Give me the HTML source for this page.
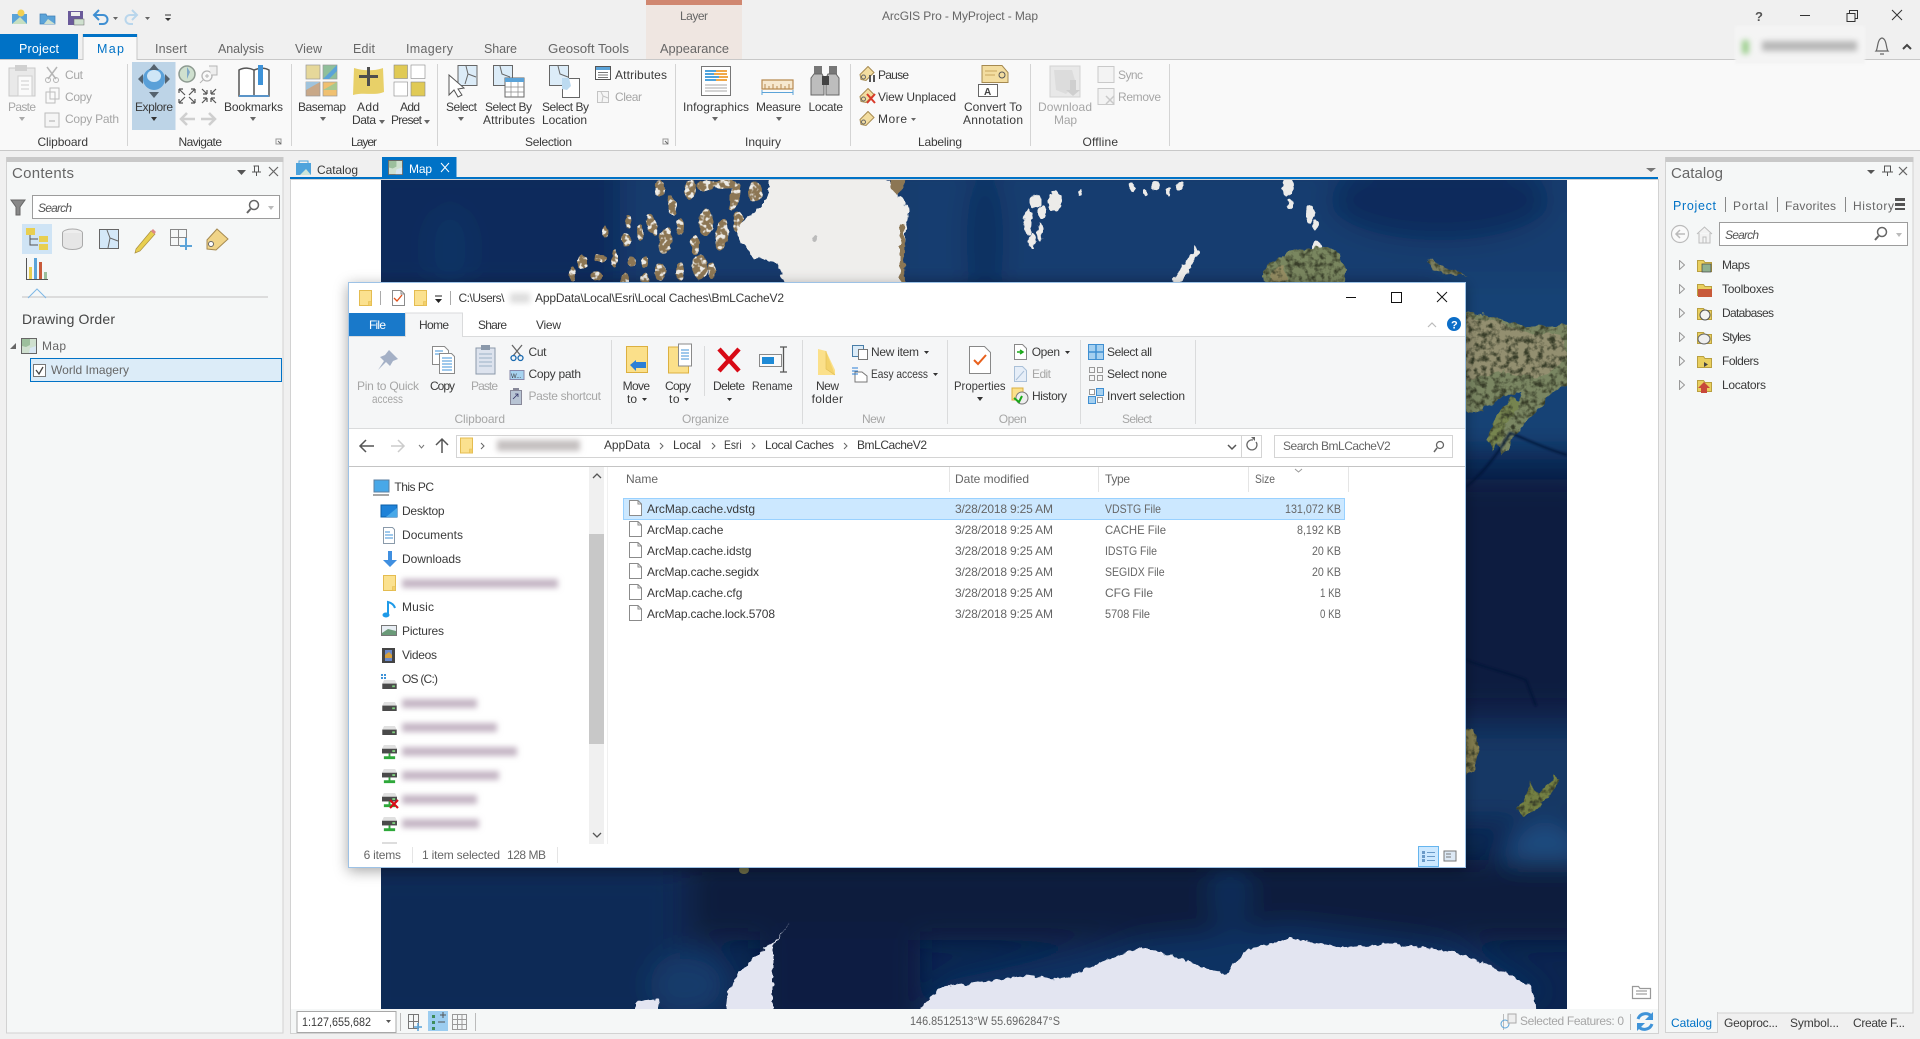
<!DOCTYPE html>
<html><head><meta charset="utf-8"><title>ArcGIS Pro - MyProject - Map</title>
<style>
html,body{margin:0;padding:0;background:#f0f0f0;width:1920px;height:1039px;overflow:hidden}
svg{display:block;font-family:"Liberation Sans",sans-serif;font-size:12px}
text{fill:#3a3a3a}
.g text,text.g{fill:#a6a6a6}
.m text,text.m{fill:#666}
.tb text{font-size:12.500px}
.lnk{stroke:#8a8a8a;fill:none}
</style></head><body>
<svg width="1920" height="1039" viewBox="0 0 1920 1039" xmlns="http://www.w3.org/2000/svg">
<defs>
<filter id="b1" x="-30%" y="-60%" width="160%" height="220%"><feGaussianBlur stdDeviation="3"/></filter>
<filter id="b8" x="-50%" y="-50%" width="200%" height="200%"><feGaussianBlur stdDeviation="13"/></filter>
<filter id="b3" x="-30%" y="-30%" width="160%" height="160%"><feGaussianBlur stdDeviation="1"/></filter>
<filter id="r1" x="-5%" y="-5%" width="110%" height="110%" color-interpolation-filters="sRGB"><feTurbulence type="fractalNoise" baseFrequency=".09" numOctaves="3" seed="4" result="n"/><feDisplacementMap in="SourceGraphic" in2="n" scale="9" xChannelSelector="R" yChannelSelector="G" result="d"/><feTurbulence type="fractalNoise" baseFrequency=".16" numOctaves="3" seed="7"/><feColorMatrix type="matrix" values="0 0 0 0 .22 0 0 0 0 .24 0 0 0 0 .16 0 0 0 3 -1.300" result="dk"/><feComposite in="dk" in2="d" operator="in" result="dki"/><feMerge><feMergeNode in="d"/><feMergeNode in="dki"/></feMerge></filter>
<filter id="r2" x="-5%" y="-5%" width="110%" height="110%" color-interpolation-filters="sRGB"><feTurbulence type="fractalNoise" baseFrequency=".16" numOctaves="2" seed="9" result="n"/><feDisplacementMap in="SourceGraphic" in2="n" scale="6" xChannelSelector="R" yChannelSelector="G"/></filter>
<filter id="spk" x="-5%" y="-5%" width="110%" height="110%" color-interpolation-filters="sRGB"><feTurbulence type="fractalNoise" baseFrequency=".13" numOctaves="2" seed="3" result="n"/><feDisplacementMap in="SourceGraphic" in2="n" scale="5" xChannelSelector="R" yChannelSelector="G" result="d"/><feTurbulence type="fractalNoise" baseFrequency=".2" numOctaves="2" seed="12"/><feColorMatrix type="matrix" values="0 0 0 0 .93 0 0 0 0 .92 0 0 0 0 .9 0 0 0 7 -3.500" result="w"/><feComposite in="w" in2="d" operator="in" result="wi"/><feMerge><feMergeNode in="d"/><feMergeNode in="wi"/></feMerge></filter>
<filter id="sh" x="-5%" y="-5%" width="110%" height="110%"><feDropShadow dx="0" dy="3" stdDeviation="7" flood-color="#000" flood-opacity=".35"/></filter>
<clipPath id="mc"><rect x="381" y="180" width="1186" height="829"/></clipPath>
<symbol id="fold" viewBox="0 0 13 16"><path d="M.5.5h12v15H.5z" fill="#fbe18f" stroke="#e4bc50"/><path d="M9.5 11.5h3v4h-3z" fill="#f3d06a" stroke="#e4bc50" stroke-width=".6"/></symbol>
<symbol id="file" viewBox="0 0 13 16"><path d="M.5.5h8.5l3.5 3.5v11.500H.5z" fill="#fff" stroke="#8b8b8b"/><path d="M9 .5V4h3.500" fill="none" stroke="#8b8b8b"/></symbol>
<symbol id="drv" viewBox="0 0 16 10"><path d="M2 0h12l2 4v5H0V4z" fill="#e0e0e0"/><path d="M0 4h16v6H0z" fill="#4a4a4a"/><path d="M11 6h3v2h-3z" fill="#7fd07f"/></symbol>
<symbol id="net" viewBox="0 0 16 16"><path d="M2 0h12l2 4v5H0V4z" fill="#e0e0e0"/><path d="M0 4h16v5H0z" fill="#4a4a4a"/><path d="M11 5.500h3v2h-3z" fill="#7fd07f"/><path d="M7 9h2v3h5v3H2v-3h5z" fill="#2ea83a"/></symbol>
<symbol id="tag" viewBox="0 0 16 16"><path d="M9 .5l6 6-8 8-5-1-1-5z" fill="#f3dda0" stroke="#a68a50"/><circle cx="4.500" cy="11" r="2" fill="none" stroke="#666"/></symbol>
<symbol id="tri" viewBox="0 0 6 10"><path d="M.5.500l5 4.500-5 4.500z" fill="#f3f5f5" stroke="#999"/></symbol>
<symbol id="cat" viewBox="0 0 15 15"><path d="M.5 2.500h6l1.500 2h6.500v9H.5z" fill="#e9cf5e" stroke="#b9a040"/></symbol>
<symbol id="mapi" viewBox="0 0 16 16"><path d="M.5.5h15v15H.5z" fill="#cfe0cf" stroke="#666"/><path d="M1 1h8v6l-4 2-4-1z" fill="#9cbf9c"/><path d="M8 15l1-5 6-2v7z" fill="#d8e6f2"/></symbol>
</defs>

<!-- base chrome -->
<rect width="1920" height="1039" fill="#f0f0f0"/>
<rect y="60" width="1920" height="90" fill="#f9f9f9"/>
<path d="M0 59.500H1920M0 150.500H1920" stroke="#c8c8c8"/>
<rect x="646" width="96" height="59" fill="#efe6e1"/><rect x="646" width="96" height="5" fill="#d08770"/>
<rect y="34" width="78" height="25" fill="#0072c6"/>
<path d="M83 60V34.500H137V60" fill="#f9f9f9" stroke="#c8c8c8"/><rect x="83" y="34" width="54" height="3" fill="#0072c6"/>

<!-- QAT -->
<path d="M12 14h15v10H12z" fill="#5ba3d8"/><path d="M12 24l8-7 7 7z" fill="#c6dfc1"/><circle cx="21" cy="13" r="3.500" fill="#f2cf52"/>
<path d="M40 14h6l1 2h8v8H40z" fill="#5ba3d8" stroke="#3f7fb5" stroke-width=".7"/><path d="M44 24l4-5 7 5z" fill="#cfe0cf"/>
<rect x="68" y="11" width="15" height="14" fill="#6a5a9a"/><rect x="71" y="12" width="9" height="4" fill="#eee"/><rect x="74" y="19" width="10" height="6" fill="#cfe0cf" stroke="#666" stroke-width=".5"/>
<path d="M95 15h8a4.500 4.500 0 0 1 0 9h-4" fill="none" stroke="#3f8fd2" stroke-width="2"/><path d="M99 10l-5 5 5 5" fill="none" stroke="#3f8fd2" stroke-width="2"/>
<path d="M136 15h-6a4.500 4.500 0 0 0 0 9h3" fill="none" stroke="#b9d6ec" stroke-width="2"/><path d="M132 10l5 5-5 5" fill="none" stroke="#b9d6ec" stroke-width="2"/>
<path d="M113 17h5l-2.500 3zM145 17h5l-2.500 3z" fill="#666"/>
<path d="M165 15h6" stroke="#333"/><path d="M165 18h6l-3 3z" fill="#333"/>

<!-- title -->
<text x="882" y="20" textLength="156" class="m">ArcGIS Pro - MyProject - Map</text>
<text x="680" y="20" textLength="28" class="m">Layer</text>
<g class="tb">
<text x="19" y="53" textLength="40" style="fill:#fff">Project</text>
<text x="97" y="53" textLength="27" style="fill:#0072c6">Map</text>
<g class="m"><text x="155" y="53" textLength="32">Insert</text><text x="218" y="53" textLength="46">Analysis</text><text x="295" y="53" textLength="27">View</text><text x="353" y="53" textLength="22">Edit</text><text x="406" y="53" textLength="47">Imagery</text><text x="484" y="53" textLength="33">Share</text><text x="548" y="53" textLength="81" lengthAdjust="spacingAndGlyphs">Geosoft Tools</text><text x="660" y="53" textLength="69" lengthAdjust="spacingAndGlyphs">Appearance</text></g>
</g>

<!-- window controls -->
<text x="1755" y="21" style="font-weight:bold;fill:#555" font-size="13">?</text>
<path d="M1800 15.500h10M1847 13.500h8v8h-8zM1849.500 13V10.500h8v8H1855M1892 10l10 10M1902 10l-10 10" fill="none" stroke="#333"/>
<rect x="1735" y="26" width="130" height="38" fill="#f4f4f4" filter="url(#b3)"/>
<g filter="url(#b1)"><rect x="1742" y="40" width="7" height="14" rx="2" fill="#9ccf8e"/><rect x="1762" y="41" width="95" height="10" fill="#b8b8b8"/></g>
<path d="M1876 51c2-2 1-12 6-13 5 1 4 11 6 13zM1880 54h4" fill="none" stroke="#666" stroke-width="1.200"/><path d="M1903 49l4-4 4 4" fill="none" stroke="#444" stroke-width="2"/>

<!-- ribbon separators -->
<path d="M127.500 64v82M291.500 64v82M437.500 64v82M675.500 64v82M850.500 64v82M1030.500 64v82M1169.500 64v82" stroke="#d4d4d4"/>

<!-- clipboard -->
<rect x="9" y="68" width="26" height="28" fill="#e9e9e9" stroke="#c9c9c9"/><rect x="15" y="65" width="12" height="6" fill="#d0d0d0"/><path d="M18 76h14v20H18z" fill="#fafafa" stroke="#cfcfcf"/><path d="M21 81h8M21 85h8M21 89h8" stroke="#ccc"/>
<path d="M47 67l9 12M57 67l-9 12" stroke="#b5b5b5" stroke-width="1.500"/><circle cx="48" cy="80" r="2.500" fill="none" stroke="#b5b5b5"/><circle cx="56" cy="80" r="2.500" fill="none" stroke="#b5b5b5"/>
<path d="M50 88h9v11h-9zM46 92h9v11h-9z" fill="#fafafa" stroke="#bcbcbc"/><path d="M45 113h14v14H45z" fill="#f5f5f5" stroke="#bcbcbc"/><path d="M49 121h6" stroke="#aaa"/>
<g class="g"><text x="8" y="111" textLength="28">Paste</text><text x="65" y="79" textLength="18">Cut</text><text x="65" y="101" textLength="27">Copy</text><text x="65" y="123" textLength="54">Copy Path</text></g>
<path d="M19 117h6l-3 4z" fill="#aaa"/>
<text x="37.500" y="146" textLength="50.500">Clipboard</text>
<!-- navigate -->
<rect x="132" y="62" width="43.500" height="68" fill="#bdd4e7"/>
<ellipse cx="154" cy="79" rx="11" ry="11" fill="#5aa0d8"/><ellipse cx="154" cy="76" rx="7" ry="6" fill="#cfe6f7"/>
<path d="M154 64l5 6h-10zM154 98l5-6h-10zM138 79l5-5v10zM170 79l-5-5v10z" fill="#55626e"/>
<text x="135" y="111" textLength="38">Explore</text><path d="M151 117h6l-3 4z" fill="#333"/>
<circle cx="187" cy="74" r="8" fill="#cfe0cf" stroke="#8d9a90" stroke-width="1.500"/><path d="M187 67l3 5-3 7z" fill="#7fa8c8"/>
<circle cx="207" cy="76" r="5" fill="none" stroke="#b5b5b5" stroke-width="1.300"/><path d="M203 80l-3 3M205 76h4M207 74v4" stroke="#b5b5b5"/><path d="M209 66h8v9h-6" fill="#eee" stroke="#b5b5b5"/>
<path d="M179 89l6 6M179 89h4M179 89v4M195 89l-6 6M195 89h-4M195 89v4M179 103l6-6M179 103h4M179 103v-4M195 103l-6-6M195 103h-4M195 103v-4M207 94l-5-5M207 94h-4M207 94v-4M211 94l5-5M211 94h4M211 94v-4M207 98l-5 5M207 98h-4M207 98v4M211 98l5 5M211 98h4M211 98v4" stroke="#555" stroke-width="1.200" fill="none"/>
<path d="M195 119h-14M187 113l-6 6 6 6M201 119h14M209 113l6 6-6 6" fill="none" stroke="#cfcfcf" stroke-width="2.500"/>
<path d="M239 70c5-3 11-2 15 0v26h-15zM254 70c5-2 10-3 15 0v26h-15z" fill="#fff" stroke="#555" stroke-width="1.500"/><path d="M239 96h30" stroke="#5a94c8" stroke-width="2"/><rect x="258" y="65" width="5" height="20" fill="#3f93d8"/>
<text x="224" y="111" textLength="59">Bookmarks</text><path d="M250 117h6l-3 4z" fill="#666"/>
<text x="178.500" y="146" textLength="43.500">Navigate</text>
<path d="M276 139h5v5h-5z" fill="none" stroke="#999"/><path d="M278 141l3 3" stroke="#666"/>
<!-- layer -->
<rect x="306" y="65" width="14" height="14" fill="#e6d89a" stroke="#999" stroke-width=".7"/><rect x="323" y="65" width="14" height="14" fill="#8fbf9a" stroke="#999" stroke-width=".7"/><path d="M323 79l14-14v6l-8 8z" fill="#5ba3d8"/><rect x="306" y="82" width="14" height="14" fill="#c8a888" stroke="#999" stroke-width=".7"/><path d="M306 82h14l-14 8z" fill="#9fc3dc"/><rect x="323" y="82" width="14" height="14" fill="#f0c070" stroke="#999" stroke-width=".7"/><path d="M323 90l14-8v8z" fill="#a9c890"/>
<path d="M354 68c10 3 20 3 29 0l1 24c-10 4-20 0-31 3z" fill="#e8d068"/><path d="M367 67h3v8h8v3h-8v8h-3v-8h-8v-3h8z" fill="#4e4e4e"/>
<rect x="394" y="65" width="13.500" height="13.500" fill="#e0ca55" stroke="#888" stroke-width=".6"/><rect x="411" y="65" width="14" height="13.500" fill="#fff" stroke="#888" stroke-width=".6"/><rect x="394" y="82" width="13.500" height="14" fill="#fff" stroke="#888" stroke-width=".6"/><rect x="411" y="82" width="14" height="14" fill="#e0ca55" stroke="#888" stroke-width=".6"/>
<text x="298" y="111" textLength="48">Basemap</text><text x="357" y="111" textLength="22">Add</text><text x="352" y="124" textLength="24">Data</text><text x="400" y="111" textLength="20">Add</text><text x="391" y="124" textLength="31">Preset</text>
<path d="M320 117h6l-3 4zM379 120h6l-3 4zM424 120h6l-3 4z" fill="#666"/>
<text x="351" y="146" textLength="26">Layer</text>
<!-- selection -->
<path d="M458 65.500h19v20h-19z" fill="#dcecf8" stroke="#666"/><path d="M466 66l2 8 8 3M468 74l-3 10" stroke="#666" fill="none"/><path d="M449 75v20l5-5 4 7 4-2-4-6 6-1z" fill="#fff" stroke="#555"/>
<path d="M493.500 65.500h19v20h-19z" fill="#dcecf8" stroke="#666"/><path d="M500 66l2 8 8 3" stroke="#666" fill="none"/><rect x="505" y="78" width="19" height="19" fill="#fff" stroke="#666"/><rect x="505" y="78" width="19" height="4" fill="#5ba3d8"/><path d="M505 87h19M505 92h19M511 82v15M518 82v15" stroke="#888" stroke-width=".7"/>
<path d="M549.500 65.500h19v20h-19z" fill="#dcecf8" stroke="#666"/><path d="M558 66l2 8 8 3" stroke="#666" fill="none"/><path d="M562.500 78.500h17v19h-17z" fill="#fff" stroke="#666"/><path d="M562 78h7l2 8-4 4-5-1z" fill="#bcdaf0"/>
<text x="446" y="111" textLength="31">Select</text><text x="485" y="111" textLength="47">Select By</text><text x="483" y="124" textLength="52">Attributes</text><text x="542" y="111" textLength="47">Select By</text><text x="542" y="124" textLength="45">Location</text>
<path d="M458 117h6l-3 4z" fill="#666"/>
<rect x="595.500" y="66.500" width="15" height="13" fill="#fff" stroke="#555"/><rect x="596" y="67" width="14" height="3" fill="#5ba3d8"/><path d="M598 72.500h10M598 75h10M598 77.500h10" stroke="#777"/>
<path d="M597.500 91.500h11v11h-11z" fill="#f5f5f5" stroke="#c4c4c4"/><path d="M601 92l2 4 5 2M603 96l-1 6" stroke="#c4c4c4" fill="none"/>
<text x="615" y="79" textLength="52">Attributes</text><text x="615" y="101" textLength="27" class="g">Clear</text>
<text x="525" y="146" textLength="47">Selection</text>
<path d="M663 139h5v5h-5z" fill="none" stroke="#999"/><path d="M665 141l3 3" stroke="#666"/>
<!-- inquiry -->
<rect x="701.500" y="66.500" width="29" height="29" fill="#fff" stroke="#777"/><path d="M705 71h12M705 74h9M705 77h14M705 80h11" stroke="#4ea3dc" stroke-width="2"/><path d="M716 71h11M714 74h13M719 77h9M716 80h11" stroke="#f0a84a" stroke-width="2"/><path d="M705 85h22M705 88h22M705 91h22" stroke="#aaa"/>
<path d="M762 80h31v9h-31z" fill="#f6e8cf" stroke="#b88a50" stroke-width="1.200"/><path d="M765 89v-5M769 89v-3M773 89v-5M777 89v-3M781 89v-5M785 89v-3M789 89v-5" stroke="#b88a50"/><path d="M762 92.500h31M762 90v5M793 90v5" stroke="#5ba3d8"/>
<path d="M814 66h8v10h-8zM829 66h8v10h-8z" fill="#777"/><path d="M811 95V78l3-4h8l2 4v17zM826 95V78l2-4h8l3 4v17z" fill="#bdbdbd" stroke="#666"/><rect x="822" y="76" width="7" height="9" fill="#444"/>
<text x="683" y="111" textLength="66">Infographics</text><text x="756" y="111" textLength="45">Measure</text><text x="808.500" y="111" textLength="34.500">Locate</text>
<path d="M712 117h6l-3 4zM776 117h6l-3 4z" fill="#666"/>
<text x="745" y="146" textLength="36">Inquiry</text>
<!-- labeling -->
<use href="#tag" x="859" y="66" width="16" height="16"/><path d="M870 75v7M874 75v7" stroke="#555" stroke-width="2"/>
<use href="#tag" x="859" y="88" width="16" height="16"/><path d="M867 94l8 9M875 94l-8 9" stroke="#d83a2a" stroke-width="2"/>
<use href="#tag" x="859" y="111" width="16" height="16"/>
<text x="878" y="79" textLength="31">Pause</text><text x="878" y="101" textLength="78">View Unplaced</text><text x="878" y="123" textLength="29">More</text><path d="M911 118h5l-2.500 3z" fill="#666"/>
<path d="M982 65.500h20l6 7v10h-26z" fill="#f3dda0" stroke="#a68a50"/><path d="M985 71h12M985 75h10" stroke="#c8a860"/><circle cx="1002" cy="75" r="3" fill="none" stroke="#555"/>
<path d="M978.500 84.500h19v12h-19z" fill="#fff" stroke="#666"/><text x="984" y="95" style="font-weight:bold;fill:#444;font-size:10px">A</text>
<text x="964" y="111" textLength="58">Convert To</text><text x="963" y="124" textLength="60">Annotation</text>
<text x="918" y="146" textLength="44">Labeling</text>
<!-- offline -->
<rect x="1050" y="66" width="30" height="31" fill="#e8e8e8" stroke="#d2d2d2"/><path d="M1054 70h18l4 14-10 10-10-4z" fill="#dcdcdc"/><path d="M1070 80v10h-4l7 6 7-6h-4V80z" fill="#cfcfcf"/><rect x="1098" y="66.500" width="16" height="16" fill="#f3f3f3" stroke="#c9c9c9"/><rect x="1098" y="88.500" width="16" height="16" fill="#f3f3f3" stroke="#c9c9c9"/><path d="M1106 96l8 8M1114 96l-8 8" stroke="#c9c9c9" stroke-width="1.500"/>
<g class="g"><text x="1038" y="111" textLength="54">Download</text><text x="1054" y="124" textLength="23">Map</text><text x="1118" y="79" textLength="25">Sync</text><text x="1118" y="101" textLength="43">Remove</text></g>
<text x="1082.500" y="146" textLength="35.500">Offline</text>

<!-- contents pane -->
<rect x="6.500" y="157.500" width="276.500" height="875.500" fill="#f5f7f7" stroke="#d2d2d2"/><rect x="6.500" y="157" width="277" height="5" fill="#c8c8c8"/>
<text x="12" y="178" textLength="62" style="font-size:15px;fill:#666">Contents</text>
<path d="M237 170h9l-4.500 5z" fill="#555"/><path d="M254.500 166v6h4v-6h-5M252 172h9M256.500 172v4" fill="none" stroke="#555"/><path d="M269 167l9 9M278 167l-9 9" stroke="#666" stroke-width="1.200"/>
<path d="M11 200h14l-5 7v8h-4v-8z" fill="#888" stroke="#666"/>
<rect x="32.500" y="195.500" width="247" height="23" fill="#fff" stroke="#9c9c9c"/>
<text x="38" y="212" textLength="34" style="font-style:italic;fill:#555">Search</text>
<circle cx="254" cy="205" r="4.500" fill="none" stroke="#666" stroke-width="1.500"/><path d="M250.500 209l-3.500 4" stroke="#666" stroke-width="2"/><path d="M268 206h6l-3 4z" fill="#bbb"/>
<rect x="22" y="224" width="30" height="30" fill="#cfe4f5"/><rect x="26" y="228" width="9" height="7" fill="#e8cf50"/><path d="M30 235v10h8M30 245v-6h8" stroke="#555" fill="none"/><rect x="39" y="236" width="9" height="6" fill="#e8cf50"/><rect x="39" y="244" width="9" height="6" fill="#e8cf50"/>
<ellipse cx="72.500" cy="233" rx="10" ry="4" fill="#eee" stroke="#aaa"/><path d="M62.500 233v12c0 6 20 6 20 0v-12" fill="#e6e6e6" stroke="#aaa"/>
<path d="M99.500 229.500h19v19h-19z" fill="#d4e8f8" stroke="#666"/><path d="M107 230l3 8 8 3M110 238l-2 10" fill="none" stroke="#666"/>
<path d="M136 249l15-18 4 3-15 17-5 2z" fill="#e8cf50" stroke="#aa9040" stroke-width=".7"/><path d="M151 231l2-2 3 3-2 2z" fill="#d88"/>
<path d="M170.500 229.500h16v16h-16zM178.500 229.500v16M170.500 237.500h16" fill="none" stroke="#888"/><path d="M186 238v12M180 246h12" stroke="#5ba3d8" stroke-width="2"/>
<path d="M217 229l11 10-12 11-9-1v-9z" fill="#f0d488" stroke="#a68a50"/><circle cx="211" cy="244" r="2.500" fill="#fff" stroke="#666"/>
<path d="M26.500 258v21.500H48" fill="none" stroke="#555"/><rect x="29" y="267" width="3" height="12" fill="#e8cf50"/><rect x="34" y="258" width="3" height="21" fill="#5ba3d8"/><rect x="39" y="262" width="3" height="17" fill="#c85a3a"/><rect x="44" y="272" width="3" height="7" fill="#9cc09c"/>
<rect x="22" y="296" width="246" height="2" fill="#dcdcdc"/><path d="M28 298l9-9 9 9" fill="none" stroke="#7fb8e6"/>
<text x="22" y="324" textLength="93" style="font-size:14px;fill:#444">Drawing Order</text>
<path d="M10 349l6-6v6z" fill="#666"/><use href="#mapi" x="21" y="338" width="16" height="16"/>
<text x="42" y="350" textLength="24" class="m">Map</text>
<rect x="30.500" y="358.500" width="251" height="23" fill="#dcecf8" stroke="#0072c6"/>
<rect x="33.500" y="364.500" width="12" height="12" fill="#fff" stroke="#777"/><path d="M36 370l3 4 4-7" fill="none" stroke="#444" stroke-width="1.300"/>
<text x="51" y="374" textLength="78" class="m">World Imagery</text>

<!-- doc tabs -->
<rect x="296" y="163" width="15" height="12" fill="#4ea3dc"/><path d="M299 163v-2h9v2" fill="none" stroke="#4ea3dc"/><path d="M300 175l6-6 5 6z" fill="#cfe6d8"/>
<text x="317" y="174" textLength="41">Catalog</text>
<rect x="382" y="157" width="74.500" height="20" fill="#0072c6"/><use href="#mapi" x="388" y="160" width="15" height="15"/>
<text x="409" y="173" textLength="23" style="fill:#fff">Map</text><path d="M441 163l8 9M449 163l-8 9" stroke="#fff"/>
<path d="M1646 168h10l-5 4z" fill="#777"/>
<rect x="290" y="177" width="1368" height="2" fill="#0072c6"/>
<rect x="290.500" y="179.500" width="1368" height="854" fill="#fff" stroke="#d2d2d2"/>

<!-- MAP -->
<g clip-path="url(#mc)">
<rect x="381" y="180" width="1186" height="829" fill="#0b2550"/>
<g filter="url(#b8)">
<rect x="360" y="160" width="260" height="130" fill="#0b2b5c"/>
<rect x="620" y="160" width="300" height="130" fill="#123a6d"/>
<rect x="910" y="160" width="680" height="130" fill="#143c70"/>
<ellipse cx="1440" cy="200" rx="110" ry="40" fill="#0c2b5c"/>
<ellipse cx="985" cy="240" rx="18" ry="70" fill="#0c2e5e"/>
<rect x="1440" y="280" width="150" height="170" fill="#184375"/>
<rect x="1440" y="480" width="150" height="230" fill="#081b40"/>
<rect x="1440" y="730" width="150" height="90" fill="#143765"/>
<ellipse cx="1545" cy="860" rx="42" ry="36" fill="#244f84"/>
<rect x="360" y="868" width="320" height="160" fill="#0c2a57"/>
<rect x="690" y="860" width="900" height="80" fill="#071a3e"/>
<rect x="760" y="930" width="160" height="100" fill="#081d42"/>
<path d="M920 1020l30-40 190-40 150-15 170 20 90 50z" fill="#0f3162"/>
<ellipse cx="690" cy="985" rx="40" ry="34" fill="#143a6a"/>
<ellipse cx="1230" cy="895" rx="20" ry="34" fill="#0f2f5a"/>
<ellipse cx="450" cy="250" rx="24" ry="44" fill="#0f3363"/>
</g>
<!-- arctic: islands with snow speckle -->
<g filter="url(#spk)" fill="#8c7654">
<ellipse cx="660" cy="188" rx="5" ry="9"/><ellipse cx="672" cy="205" rx="4" ry="11" transform="rotate(-15 672 205)"/><ellipse cx="690" cy="190" rx="6" ry="9"/><ellipse cx="705" cy="186" rx="9" ry="5"/><ellipse cx="725" cy="184" rx="13" ry="4"/>
<ellipse cx="735" cy="197" rx="5" ry="14" transform="rotate(15 735 197)"/><ellipse cx="755" cy="192" rx="7" ry="10"/><ellipse cx="778" cy="185" rx="5" ry="6"/>
<ellipse cx="628" cy="222" rx="3" ry="7"/><ellipse cx="652" cy="225" rx="5" ry="12" transform="rotate(-20 652 225)"/><ellipse cx="605" cy="232" rx="3" ry="6"/>
<ellipse cx="626" cy="240" rx="5" ry="6"/><ellipse cx="640" cy="232" rx="3" ry="8"/><ellipse cx="665" cy="240" rx="6" ry="14" transform="rotate(10 665 240)"/><ellipse cx="680" cy="226" rx="4" ry="9"/>
<ellipse cx="706" cy="222" rx="7" ry="14"/><ellipse cx="722" cy="235" rx="6" ry="16" transform="rotate(10 722 235)"/><ellipse cx="695" cy="245" rx="4" ry="10"/>
<ellipse cx="600" cy="258" rx="6" ry="4"/><ellipse cx="582" cy="262" rx="5" ry="7"/><ellipse cx="572" cy="274" rx="3" ry="7"/><ellipse cx="596" cy="276" rx="6" ry="5"/>
<ellipse cx="615" cy="258" rx="3" ry="9"/><ellipse cx="632" cy="262" rx="4" ry="5"/><ellipse cx="625" cy="280" rx="4" ry="7"/><ellipse cx="645" cy="262" rx="3" ry="5"/>
<ellipse cx="660" cy="272" rx="5" ry="9"/><ellipse cx="680" cy="272" rx="4" ry="9"/><ellipse cx="700" cy="267" rx="8" ry="12"/><ellipse cx="712" cy="270" rx="4" ry="8"/>
<ellipse cx="645" cy="278" rx="4" ry="5"/><ellipse cx="738" cy="222" rx="5" ry="11"/>
</g>
<!-- greenland -->
<g filter="url(#r2)">
<path d="M769 178H885L898 193 909 210 903 250 902 290H786L777 263 753 257 740 240 736 227 761 207 769 193z" fill="#efeeec"/>
<path d="M888 178h18l-3 10-6 6-5-6zM900 225l4 0 1 60-5 0z" fill="#8c7654"/>
<ellipse cx="815" cy="238" rx="2" ry="4" fill="#bbb"/>
<!-- svalbard etc -->
<g fill="#ecebe9">
<ellipse cx="1055" cy="201" rx="7" ry="10"/><ellipse cx="1035" cy="201" rx="6" ry="7"/><ellipse cx="1028" cy="222" rx="4" ry="13"/><ellipse cx="1042" cy="212" rx="4" ry="7"/><ellipse cx="1032" cy="240" rx="3" ry="8"/><ellipse cx="1040" cy="232" rx="3" ry="9"/>
<ellipse cx="1080" cy="193" rx="2" ry="3"/><ellipse cx="1132" cy="187" rx="3" ry="4"/><ellipse cx="1145" cy="193" rx="2" ry="3"/><ellipse cx="1155" cy="185" rx="4" ry="4"/><ellipse cx="1168" cy="192" rx="2" ry="4"/><ellipse cx="1180" cy="186" rx="4" ry="4"/>
<ellipse cx="1288" cy="187" rx="6" ry="8"/><ellipse cx="1290" cy="204" rx="3" ry="6"/><ellipse cx="1310" cy="214" rx="4" ry="9"/><ellipse cx="1316" cy="225" rx="3" ry="5"/><ellipse cx="1317" cy="249" rx="5" ry="8"/>
</g>
<path d="M1196 247l3 5-10 18-7 12-9 0 8-14z" fill="#ecebe9"/>
</g>
<!-- land -->
<g filter="url(#r1)">
<path d="M1262 288l6-24 22-14 36-4 14 10 7 14-5 24z" fill="#79865f"/>
<path d="M1266 288l6-16 10-8 6 14-8 14z" fill="#948c62"/>
<path d="M1426 262l8-3 6 6 14 6 14 6-15-2-10-2-10-3z" fill="#7c7e5e"/>
<path d="M1450 310l43 6 34 12 50-4v52l-30 23-27 30-17 27-5-15 5-23 20-25-20 2-20 17-7 0-30 0z" fill="#7a8662"/>
<path d="M1466 318l30 2 34 14 30 0 8 24-30 20-36-6-36 8z" fill="#938f70"/>
<path d="M1488 440l6-20 18-24 6 8-12 24-12 24z" fill="#76844f"/>
<path d="M1530 782l4 8 4 4 10-10 6-8 6 2-6 12-8 8-8 10-14 8-8-6 10-12z" fill="#737f42"/>
<path d="M1460 728l14 4 6 18-8 22-12 8z" fill="#857f50"/>
</g>
<path d="M1466 487c15-12 30-30 44-54 12 4 30 14 57 22M1466 660c20 8 40 12 60 20l10 26" fill="none" stroke="#061737" stroke-width="2" filter="url(#b3)"/>
<!-- antarctica -->
<g filter="url(#r2)" fill="#e3e5f1">
<path d="M915 1015L924 1003 943 987 990 981 1026 975 1060 980 1100 962 1142 947 1175 957 1225 975 1246 950 1292 938 1341 948 1391 943 1457 953 1507 973 1532 987 1537 1015z"/>
<path d="M773 1015L773 945 790 923 777 938 755 957 735 977 726 1000 728 1015z"/>
<path d="M636 1015l0-13 22-3 2 16z"/>
</g>
<ellipse cx="744" cy="870" rx="5" ry="4" fill="#6f6f48"/>
</g>

<!-- status bar of map -->
<rect x="291" y="1009" width="1367" height="24" fill="#f5f7f7"/>
<rect x="297" y="1011.500" width="99" height="21" fill="#fff" stroke="#a8a8a8"/>
<text x="302" y="1026" textLength="69" lengthAdjust="spacingAndGlyphs">1:127,655,682</text><path d="M386 1020h5l-2.500 3z" fill="#555"/>
<path d="M400.500 1013v18M475.500 1013v18" stroke="#bbb"/>
<path d="M408.500 1014.500h10v14h-10zM408.500 1021.500h10M413.500 1014.500v14" fill="none" stroke="#777"/><path d="M418 1023v8M414 1027h8" stroke="#5ba3d8" stroke-width="1.500"/>
<rect x="428" y="1011" width="20" height="20" fill="#9ccdf0"/><path d="M432 1015h3v3h-3zM432 1021h3v3h-3zM432 1027h3v3h-3z" fill="#3f8c5a"/><path d="M440 1015h6M443 1012v6M438 1022h7" stroke="#555"/>
<path d="M452.500 1014.500h14v15h-14zM452.500 1019.500h14M452.500 1024.500h14M457.500 1014.500v15M462 1014.500v15" fill="none" stroke="#9a9a9a"/>
<text x="910" y="1025" textLength="150" class="m" lengthAdjust="spacingAndGlyphs">146.8512513°W 55.6962847°S</text>
<path d="M1503.500 1014v16M1630.500 1014v16" stroke="#bbb"/>
<circle cx="1505" cy="1024" r="4" fill="none" stroke="#5ba3d8"/><path d="M1508 1014h8v9h-8z" fill="#eee" stroke="#aaa"/>
<text x="1520" y="1025" textLength="104" class="g">Selected Features: 0</text>
<path d="M1638 1019a8 8 0 0 1 14-2M1652 1024a8 8 0 0 1-14 2" fill="none" stroke="#3f93d8" stroke-width="3"/><path d="M1653 1012v8h-8zM1637 1031v-8h8z" fill="#3f93d8"/>
<path d="M1632.500 986.500h6l1.500 2h10.500v10h-18z" fill="#fff" stroke="#999" stroke-width="1.200"/><path d="M1636 991h11M1636 994h11" stroke="#888"/>

<!-- catalog pane -->
<rect x="1665.500" y="157.500" width="247.500" height="855.500" fill="#f5f7f7" stroke="#d2d2d2"/><rect x="1665.500" y="157" width="248" height="5" fill="#c8c8c8"/>
<text x="1671" y="178" textLength="52" style="font-size:15px;fill:#666">Catalog</text>
<path d="M1867 170h8l-4 4z" fill="#555"/><path d="M1884.500 166h6v6h-6zM1882 172h11M1887.500 172v4" fill="none" stroke="#555"/><path d="M1899 167l8 8M1907 167l-8 8" stroke="#666" stroke-width="1.200"/>
<text x="1673" y="210" textLength="43" style="fill:#0072c6;font-size:12.500px">Project</text>
<path d="M1725.500 197v15M1777.500 197v15M1845.500 197v15" stroke="#888"/>
<g class="m"><text x="1733" y="210" textLength="35">Portal</text><text x="1785" y="210" textLength="51">Favorites</text><text x="1853" y="210" textLength="41">History</text></g>
<path d="M1895 198h10v3h-10zM1895 203h10v3h-10zM1895 208h10v2h-10z" fill="#555"/>
<circle cx="1680" cy="234" r="8.500" fill="#fafafa" stroke="#bbb" stroke-width="1.200"/><path d="M1685 234h-9M1680 230l-4 4 4 4" fill="none" stroke="#bbb" stroke-width="1.500"/>
<path d="M1697 234l7.500-7 7.500 7M1699 233v10h11v-10M1703 243v-6h3v6" fill="#f2f2f2" stroke="#bdbdbd"/>
<rect x="1719.500" y="222.500" width="188" height="23" fill="#fff" stroke="#9c9c9c"/>
<text x="1725" y="239" textLength="34" style="font-style:italic;fill:#555">Search</text>
<circle cx="1882" cy="232" r="4.500" fill="none" stroke="#666" stroke-width="1.500"/><path d="M1878.500 236l-3.500 4" stroke="#666" stroke-width="2"/><path d="M1896 233h6l-3 4z" fill="#bbb"/>
<use href="#tri" x="1679" y="260" width="6" height="10"/><use href="#tri" x="1679" y="284" width="6" height="10"/><use href="#tri" x="1679" y="308" width="6" height="10"/><use href="#tri" x="1679" y="332" width="6" height="10"/><use href="#tri" x="1679" y="356" width="6" height="10"/><use href="#tri" x="1679" y="380" width="6" height="10"/>
<use href="#cat" x="1697" y="258" width="15" height="15"/><rect x="1702" y="264" width="9" height="8" fill="#8fb08f" stroke="#444" stroke-width=".7"/>
<use href="#cat" x="1697" y="282" width="15" height="15"/><rect x="1698" y="289" width="14" height="8" fill="#c85a3a"/>
<use href="#cat" x="1697" y="306" width="15" height="15"/><ellipse cx="1705" cy="315" rx="5" ry="5" fill="#f3f3f3" stroke="#555"/>
<use href="#cat" x="1697" y="330" width="15" height="15"/><ellipse cx="1704" cy="339" rx="6" ry="5" fill="#eee" stroke="#666"/>
<use href="#cat" x="1697" y="354" width="15" height="15"/><path d="M1704 362v5l4-2.500z" fill="#444"/>
<use href="#cat" x="1697" y="378" width="15" height="15"/><path d="M1704 382l-6 6h3v5h6v-5h3z" fill="#c8483a"/>
<text x="1722" y="269" textLength="28">Maps</text><text x="1722" y="293" textLength="52">Toolboxes</text><text x="1722" y="317" textLength="52">Databases</text><text x="1722" y="341" textLength="29">Styles</text><text x="1722" y="365" textLength="37">Folders</text><text x="1722" y="389" textLength="44">Locators</text>
<!-- bottom tabs -->
<path d="M1665.500 1013v19.500h52V1012" fill="#f5f7f7" stroke="#d2d2d2"/><rect x="1666" y="1010" width="51" height="4" fill="#f5f7f7"/>
<text x="1671" y="1027" textLength="41" style="fill:#0072c6">Catalog</text>
<text x="1724" y="1027" textLength="54">Geoproc...</text><text x="1790" y="1027" textLength="49">Symbol...</text><text x="1853" y="1027" textLength="52">Create F...</text>

<!-- EXPLORER -->
<rect x="348.500" y="282.500" width="1117" height="585" fill="#fff" stroke="#9dc2e6" filter="url(#sh)"/>
<rect x="349" y="337" width="1116" height="91" fill="#f5f6f7"/>
<path d="M349 336.500H1465M349 428.500H1465" stroke="#dadbdc"/><path d="M349 466.500H1465" stroke="#c4c4c4"/>
<rect x="349" y="313" width="56" height="23" fill="#1979ca"/><path d="M405.500 337v-24H462.500v24" fill="#f5f6f7" stroke="#dadbdc"/><rect x="406" y="333" width="56" height="5" fill="#f5f6f7"/>
<use href="#fold" x="359" y="290" width="13" height="16"/><path d="M380.500 291v14M450.500 291v14" stroke="#aaa"/>
<use href="#file" x="392" y="290" width="13" height="16"/><path d="M394 298l3 3 5-6" fill="none" stroke="#e0501a" stroke-width="1.300"/>
<use href="#fold" x="414" y="290" width="13" height="16"/>
<path d="M435 296h7" stroke="#222"/><path d="M435 299h7l-3.500 4z" fill="#222"/>
<text x="458.500" y="302" textLength="46">C:\Users\</text>
<rect x="510" y="293" width="20" height="10" fill="#ddd" filter="url(#b1)"/>
<text x="535" y="302" textLength="249">AppData\Local\Esri\Local Caches\BmLCacheV2</text>
<path d="M1346 297.500h10M1391.500 292.500h10v10h-10zM1437 292l10 10M1447 292l-10 10" fill="none" stroke="#111"/>
<path d="M1428 327l4-4 4 4" fill="none" stroke="#bbb" stroke-width="1.200"/><circle cx="1454" cy="324" r="7" fill="#0c6ec8"/><text x="1451" y="328.500" style="fill:#fff;font-weight:bold;font-size:11px">?</text>
<text x="369" y="329" textLength="17" style="fill:#fff">File</text><text x="419" y="329" textLength="30">Home</text><text x="478" y="329" textLength="29">Share</text><text x="536" y="329" textLength="25">View</text>
<path d="M611.500 340v84M802.500 340v84M947.500 340v84M1080.500 340v84M1195.500 340v84" stroke="#dadbdc"/><path d="M704.500 346v50" stroke="#dadbdc"/>
<!-- clipboard group -->
<path d="M389 350l9 9-5 2-3 5-4-4-8 8 6-9-4-4 5-2z" fill="#a4b0c6"/>
<path d="M432.500 346.500h12l4 4v14h-16z" fill="#fff" stroke="#8a8a8a"/><path d="M439.500 353.500h12l3 3v17h-15z" fill="#fff" stroke="#8a8a8a"/><path d="M442 358h10M442 361h10M442 364h10M442 367h10M442 370h10" stroke="#3f93d8"/><path d="M435 351h8M435 354h4" stroke="#3f93d8"/>
<rect x="476" y="348" width="19" height="26" fill="#dde3ee" stroke="#8a98aa"/><rect x="481" y="345" width="9" height="5" fill="#8a98aa"/><path d="M479 354h13M479 358h13M479 362h13M479 366h13" stroke="#9cb0c6"/>
<path d="M512 345l9 11M522 345l-9 11" stroke="#666" stroke-width="1.300"/><circle cx="513.500" cy="358" r="2.500" fill="none" stroke="#1a6ab0" stroke-width="1.300"/><circle cx="520.500" cy="358" r="2.500" fill="none" stroke="#1a6ab0" stroke-width="1.300"/>
<rect x="510" y="370.500" width="14" height="9" fill="#a7d3f0" stroke="#88a"/><text x="511" y="378" style="font-size:6px">W...</text>
<rect x="510.500" y="390.500" width="11" height="14" fill="#b8c4d4" stroke="#889"/><rect x="513" y="388" width="6" height="3" fill="#889"/><path d="M513 399l5-5M515 394h3v3" fill="none" stroke="#336" stroke-width=".8"/>
<g class="g"><text x="357" y="390" textLength="62">Pin to Quick</text><text x="372" y="403" textLength="31" lengthAdjust="spacingAndGlyphs">access</text><text x="471" y="390" textLength="27">Paste</text><text x="528.500" y="400" textLength="72.500">Paste shortcut</text><text x="454.500" y="423" textLength="50.500">Clipboard</text><text x="682" y="423" textLength="47">Organize</text><text x="862" y="423" textLength="23">New</text><text x="998.700" y="423" textLength="28">Open</text><text x="1122" y="423" textLength="30">Select</text></g>
<text x="430" y="390" textLength="25">Copy</text><text x="528.500" y="356" textLength="18">Cut</text><text x="528.500" y="378" textLength="52.500">Copy path</text>
<!-- organize -->
<path d="M626.500 346.500h21v26h-21z" fill="#fbe08a" stroke="#dcb040"/><path d="M636 360l-6 5 6 6v-3h10v-6h-10z" fill="#2b7fd6"/>
<path d="M668.500 347h20v26h-20z" fill="#fbe08a" stroke="#dcb040"/><path d="M678.500 344h13l0 22h-13z" fill="#fff" stroke="#8a8a8a"/><path d="M681 350h8M681 353h8M681 356h8M681 359h8" stroke="#3f93d8"/>
<path d="M719 349l20 22M739 349l-20 22" stroke="#d80a16" stroke-width="4.500"/>
<rect x="759.500" y="354.500" width="22" height="12" fill="#fafafa" stroke="#888"/><rect x="762" y="357" width="12" height="7" fill="#1e8ad6"/><path d="M780 347h7M780 372h7M783.500 347v25" stroke="#555" stroke-width="1.300"/>
<text x="622.600" y="390" textLength="27.400">Move</text><text x="627" y="403" textLength="10">to</text><text x="665" y="390" textLength="26">Copy</text><text x="669" y="403" textLength="10.500">to</text><text x="713" y="390" textLength="32">Delete</text><text x="752" y="390" textLength="40.600" lengthAdjust="spacingAndGlyphs">Rename</text>
<path d="M642 398h5l-2.500 3zM684 398h5l-2.500 3zM727 398h5l-2.500 3z" fill="#333"/>
<!-- new -->
<path d="M818 349l8 2 9 19v5h-17z" fill="#fbe08a"/><path d="M826 351v18l9 6" fill="#f3d26a" stroke="#e0bc56" stroke-width=".6"/>
<text x="816" y="390" textLength="23">New</text><text x="811.600" y="403" textLength="31.400">folder</text>
<rect x="852.500" y="345.500" width="11" height="11" fill="#dcecf8" stroke="#4a7ea8"/><rect x="858.500" y="349.500" width="9" height="10" fill="#fff" stroke="#777"/>
<path d="M855 372h7l5 4v6h-12z" fill="#fff" stroke="#777"/><path d="M852 368h6M852 371h6M852 374h6" stroke="#2b7fd6"/>
<text x="871" y="356" textLength="48">New item</text><text x="871" y="378" textLength="57" lengthAdjust="spacingAndGlyphs">Easy access</text><path d="M924 351h5l-2.500 3zM933 373h5l-2.500 3z" fill="#333"/>
<!-- open -->
<path d="M969.500 346.500h15l6 6v21h-21z" fill="#fff" stroke="#888"/><path d="M974 360l4 4 8-9" fill="none" stroke="#e8601c" stroke-width="2"/>
<text x="954" y="390" textLength="51.600" lengthAdjust="spacingAndGlyphs">Properties</text><path d="M977 397h6l-3 4z" fill="#333"/>
<path d="M1014.500 344.500h8l4 4v11h-12z" fill="#fff" stroke="#888"/><path d="M1017 352h5M1020 350l3 2-3 2" stroke="#1aa81a" fill="none" stroke-width="1.500"/>
<path d="M1014.500 366.500h8l4 4v11h-12z" fill="#e6eef8" stroke="#aac0d8"/><path d="M1016 380l8-9" stroke="#aac0d8"/>
<rect x="1012" y="388" width="11" height="12" fill="#fbe08a" stroke="#dcb040"/><circle cx="1022" cy="398" r="6" fill="#eee" stroke="#777"/><path d="M1014 398l5 4 3-6" fill="none" stroke="#1aa81a" stroke-width="2"/>
<text x="1031.700" y="356" textLength="28.300">Open</text><text x="1032" y="378" textLength="19" class="g">Edit</text><text x="1032" y="400" textLength="35">History</text><path d="M1065 351h5l-2.500 3z" fill="#333"/>
<!-- select -->
<rect x="1088.500" y="344.500" width="15" height="15" fill="#a5d0f0" stroke="#3f8fd2"/><path d="M1096 344.500v15M1088.500 352h15" stroke="#3f8fd2" stroke-width="1.500"/>
<path d="M1089.500 367.500h5v5h-5zM1097.500 367.500h5v5h-5zM1089.500 375.500h5v5h-5zM1097.500 375.500h5v5h-5z" fill="none" stroke="#999"/>
<path d="M1089.500 389.500h5v5h-5zM1097.500 397.500h5v5h-5z" fill="#fff" stroke="#999"/><path d="M1096.500 388.500h7v7h-7zM1088.500 396.500h7v7h-7z" fill="#a5d0f0" stroke="#3f8fd2"/>
<text x="1107" y="356" textLength="45">Select all</text><text x="1107" y="378" textLength="60">Select none</text><text x="1107" y="400" textLength="78">Invert selection</text>
<!-- address -->
<path d="M360 446h14M366 440l-6 6 6 6" fill="none" stroke="#555" stroke-width="1.500"/><path d="M391 446h13M398 440l6 6-6 6" fill="none" stroke="#ccc" stroke-width="1.500"/><path d="M419 445l2.500 3 2.500-3" fill="none" stroke="#777"/><path d="M442 453v-14M436 445l6-6 6 6" fill="none" stroke="#555" stroke-width="1.500"/>
<rect x="456.500" y="435.500" width="805" height="22" fill="#fff" stroke="#d4d4d4"/><path d="M1241.500 435v22" stroke="#d4d4d4"/>
<use href="#fold" x="460" y="437" width="13" height="17"/>
<path d="M481 443l3 3-3 3M660 443l3 3-3 3M712 443l3 3-3 3M752 443l3 3-3 3M844 443l3 3-3 3" fill="none" stroke="#666"/>
<rect x="497" y="440" width="83" height="11" fill="#c4c0c0" filter="url(#b1)"/>
<text x="604" y="449" textLength="46">AppData</text><text x="673" y="449" textLength="28">Local</text><text x="724" y="449" textLength="17.600" lengthAdjust="spacingAndGlyphs">Esri</text><text x="765" y="449" textLength="69">Local Caches</text><text x="857" y="449" textLength="70">BmLCacheV2</text>
<path d="M1228 445l4 4 4-4" fill="none" stroke="#555" stroke-width="1.500"/>
<path d="M1256 442a5 5 0 1 1-3-2" fill="none" stroke="#666" stroke-width="1.300"/><path d="M1251 437h4v4z" fill="#666"/>
<rect x="1274.500" y="435.500" width="178" height="22" fill="#fff" stroke="#d4d4d4"/>
<text x="1283" y="450" textLength="107.700" class="m">Search BmLCacheV2</text>
<circle cx="1440" cy="445" r="3.500" fill="none" stroke="#666" stroke-width="1.300"/><path d="M1437 448l-3 4" stroke="#666" stroke-width="1.500"/>
<!-- nav tree -->
<rect x="589" y="467" width="15" height="377" fill="#f0f0f0"/><rect x="589" y="534" width="15" height="210" fill="#c8c8c8"/><path d="M593 478l4-4 4 4M593 833l4 4 4-4" fill="none" stroke="#555" stroke-width="1.300"/>
<path d="M607.500 467v377" stroke="#f0f0f0"/>
<rect x="374" y="480" width="15" height="12" fill="#48a8e8" stroke="#5b7fa0"/><path d="M373 495h16" stroke="#888" stroke-width="1.500"/>
<text x="394.400" y="491" textLength="39.600">This PC</text>
<rect x="381" y="505" width="16" height="12" fill="#1e82d8" stroke="#0b5fa8"/><path d="M386 517l11-9v9z" fill="#48a8e8"/>
<path d="M383.500 527.500h9l2 2v14h-11z" fill="#fff" stroke="#8a9aaa"/><path d="M385 532h5M385 535h8M385 538h8" stroke="#3f93d8"/>
<path d="M388 551h4v9h5l-7 7-7-7h5z" fill="#3f8fe0"/>
<use href="#fold" x="383" y="575" width="13" height="16"/>
<path d="M388 615v-13c4 1 6 3 7 6" fill="none" stroke="#1e9ae8" stroke-width="2"/><ellipse cx="386" cy="615" rx="3.500" ry="2.500" fill="#1e9ae8"/>
<rect x="381.500" y="625.500" width="15" height="10" fill="#e8eef4" stroke="#777"/><path d="M382 633l6-4 8 2v4h-14z" fill="#6a9a78"/>
<rect x="382" y="648" width="13" height="15" fill="#444"/><rect x="385" y="650" width="7" height="11" fill="#6a88c8"/><path d="M385 655l4-3 3 3v3h-7z" fill="#d8a03a"/>
<path d="M381 674h2v2h-2zM384 674h2v2h-2zM381 677h2v2h-2zM384 677h2v2h-2z" fill="#3f93d8"/><use href="#drv" x="382" y="680" width="15" height="9"/>
<use href="#drv" x="382" y="702" width="15" height="9"/><use href="#drv" x="382" y="726" width="15" height="9"/><use href="#net" x="382" y="745" width="15" height="15"/><use href="#net" x="382" y="769" width="15" height="15"/><use href="#net" x="382" y="793" width="15" height="15"/><use href="#net" x="382" y="817" width="15" height="15"/><rect x="382" y="842" width="15" height="2" fill="#ddd"/>
<path d="M390 800l8 8M398 800l-8 8" stroke="#d80a16" stroke-width="2.200"/>
<text x="402" y="515" textLength="42.600">Desktop</text><text x="402" y="539" textLength="61">Documents</text><text x="402" y="563" textLength="59">Downloads</text><text x="402" y="611" textLength="32">Music</text><text x="402" y="635" textLength="42">Pictures</text><text x="402" y="659" textLength="35">Videos</text><text x="402" y="683" textLength="36">OS (C:)</text>
<g fill="#c4b6c4" filter="url(#b1)"><rect x="402" y="579" width="156" height="9"/><rect x="402" y="699" width="75" height="9"/><rect x="402" y="723" width="95" height="9"/><rect x="402" y="747" width="115" height="9"/><rect x="402" y="771" width="97" height="9"/><rect x="402" y="795" width="75" height="9"/><rect x="402" y="819" width="77" height="9"/></g>
<!-- file list -->
<text x="626" y="483" textLength="32" class="m">Name</text><text x="955" y="483" textLength="74" class="m">Date modified</text><text x="1105" y="483" textLength="25" class="m">Type</text><text x="1255" y="483" textLength="20" class="m" lengthAdjust="spacingAndGlyphs">Size</text>
<path d="M949.500 467v25M1098.500 467v25M1248.500 467v25M1348.500 467v25" stroke="#e5e5e5"/><path d="M1295 469l3.500 3 3.500-3" fill="none" stroke="#999"/>
<rect x="623.500" y="498.500" width="721" height="21" fill="#cce8ff" stroke="#99d1ff"/>
<use href="#file" x="629" y="500" width="13" height="16"/><use href="#file" x="629" y="521" width="13" height="16"/><use href="#file" x="629" y="542" width="13" height="16"/><use href="#file" x="629" y="563" width="13" height="16"/><use href="#file" x="629" y="584" width="13" height="16"/><use href="#file" x="629" y="605" width="13" height="16"/>
<text x="647" y="513" textLength="108">ArcMap.cache.vdstg</text><text x="647" y="534" textLength="76.400">ArcMap.cache</text><text x="647" y="555" textLength="104.500">ArcMap.cache.idstg</text><text x="647" y="576" textLength="112">ArcMap.cache.segidx</text><text x="647" y="597" textLength="95.400">ArcMap.cache.cfg</text><text x="647" y="618" textLength="128">ArcMap.cache.lock.5708</text>
<g class="m">
<text x="955" y="513" textLength="98">3/28/2018 9:25 AM</text><text x="955" y="534" textLength="98">3/28/2018 9:25 AM</text><text x="955" y="555" textLength="98">3/28/2018 9:25 AM</text><text x="955" y="576" textLength="98">3/28/2018 9:25 AM</text><text x="955" y="597" textLength="98">3/28/2018 9:25 AM</text><text x="955" y="618" textLength="98">3/28/2018 9:25 AM</text>
<text x="1105" y="513" textLength="56" lengthAdjust="spacingAndGlyphs">VDSTG File</text><text x="1105" y="534" textLength="61" lengthAdjust="spacingAndGlyphs">CACHE File</text><text x="1105" y="555" textLength="52" lengthAdjust="spacingAndGlyphs">IDSTG File</text><text x="1105" y="576" textLength="59.600" lengthAdjust="spacingAndGlyphs">SEGIDX File</text><text x="1105" y="597" textLength="48" lengthAdjust="spacingAndGlyphs">CFG File</text><text x="1105" y="618" textLength="45" lengthAdjust="spacingAndGlyphs">5708 File</text>
<text x="1285" y="513" textLength="56" lengthAdjust="spacingAndGlyphs">131,072 KB</text><text x="1297" y="534" textLength="44" lengthAdjust="spacingAndGlyphs">8,192 KB</text><text x="1312" y="555" textLength="29" lengthAdjust="spacingAndGlyphs">20 KB</text><text x="1312" y="576" textLength="29" lengthAdjust="spacingAndGlyphs">20 KB</text><text x="1320" y="597" textLength="21" lengthAdjust="spacingAndGlyphs">1 KB</text><text x="1320" y="618" textLength="21" lengthAdjust="spacingAndGlyphs">0 KB</text>
</g>
<!-- explorer status -->
<g class="m"><text x="363.600" y="859" textLength="37.400">6 items</text><text x="422" y="859" textLength="78">1 item selected</text><text x="507" y="859" textLength="39">128 MB</text></g>
<path d="M412.500 847v16M557.500 847v16" stroke="#e5e5e5"/>
<rect x="1418.500" y="846.500" width="20" height="20" fill="#cce8ff" stroke="#66b5ee"/><path d="M1422 851h3v3h-3zM1422 855h3v3h-3zM1422 859h3v3h-3z" fill="#6a9ac8"/><path d="M1427 852.500h8M1427 856.500h8M1427 860.500h8" stroke="#6a9ac8"/>
<rect x="1444" y="851" width="12" height="10" fill="#dce8f4" stroke="#777"/><path d="M1446 854h5M1446 857h5" stroke="#777"/>
</svg>
</body></html>
